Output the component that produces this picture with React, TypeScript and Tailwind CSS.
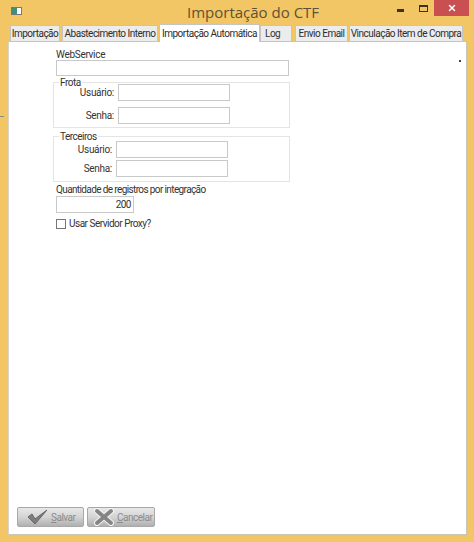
import React from 'react';
import { X } from 'lucide-react';

const Tab: React.FC<{ label: string; className: string }> = ({ label, className }) => (
    <div className={`${className} h-[16px] shrink-0 flex items-center justify-center whitespace-nowrap bg-[#ececec] border border-b-0 border-[#c4c4c4] text-[#2c2c2c]`}>
        {label}
    </div>
);

const Field: React.FC<{ className: string; children?: React.ReactNode }> = ({ className, children }) => (
    <div className={`${className} bg-white border border-[#c9c9c9] flex items-center justify-end pr-[2px]`}>{children}</div>
);

const LoginGroup: React.FC<{ title: string; className: string; labelWidth: string; firstTop: string; gap: string }> = ({ title, className, labelWidth, firstTop, gap }) => (
    <fieldset className={`${className} ml-[44px] border border-[#e4e4e4] w-[237px] px-0 min-w-0`}>
        <legend className="ml-[5px] px-[1px] h-[11px] leading-[11px] text-[#333]">{title}</legend>
        <div className={`${firstTop} flex items-center`}>
            <span className={`${labelWidth} text-right pr-[4px] tracking-[-0.3px]`}>Usuário:</span>
            <Field className="w-[112px] h-[17px]" />
        </div>
        <div className={`${gap} flex items-center`}>
            <span className={`${labelWidth} text-right pr-[4px] tracking-[-0.3px]`}>Senha:</span>
            <Field className="w-[112px] h-[17px]" />
        </div>
    </fieldset>
);

export default function App() {
    return (
        <div className="relative w-[474px] h-[542px] overflow-hidden bg-[#f2c664] flex flex-col font-['Roboto',sans-serif] text-[10px] tracking-[-0.5px] text-[#333]">
            <div className="absolute left-0 top-[116px] w-[4px] h-[1px] bg-[#8a8a8a]" />

            {/* title bar */}
            <div className="h-[25px] shrink-0 flex items-start">
                <div className="w-[11px] ml-[11px] mt-[7px] h-[8px] bg-white border border-[#777] flex">
                    <div className="w-[5px] bg-[#3f8f7d]" />
                </div>
                <div className="flex-1 pl-[165px] pt-[2px] text-[15px] tracking-normal leading-[20px] font-['Open_Sans',sans-serif] text-[#5d5236] whitespace-nowrap">Importação do CTF</div>
                <div className="w-[7px] h-[3px] mt-[9px] bg-[#3a3323] mr-[15px]" />
                <div className="w-[9px] h-[7px] mt-[5px] border border-t-2 border-[#3a3323] mr-[6px]" />
                <div className="w-[35px] h-[16px] bg-[#c94f50] flex items-center justify-center mr-[5px]">
                    <X size={10} strokeWidth={3.5} className="text-white" />
                </div>
            </div>

            {/* tabs */}
            <div className="h-[16px] shrink-0 ml-[10px] flex items-end">
                <Tab label="Importação" className="w-[50px]" />
                <Tab label="Abastecimento Interno" className="ml-[2px] w-[96px]" />
                <div className="ml-[1px] w-[101px] h-[18px] -mb-[1px] shrink-0 relative z-10 flex items-center justify-center pb-[1px] whitespace-nowrap bg-white border border-b-0 border-[#c4c4c4] text-[#2c2c2c]">Importação Automática</div>
                <div className="w-[32px] h-[16px] shrink-0 pl-[4px] flex items-center bg-[#ececec] border border-b-0 border-[#c4c4c4]">Log</div>
                <Tab label="Envio Email" className="ml-[3px] w-[53px]" />
                <Tab label="Vinculação Item de Compra" className="ml-[1px] w-[114px]" />
            </div>

            {/* tab page */}
            <div className="flex-1 ml-[8px] mr-[6px] mb-[6px] bg-white border-t border-l border-t-[#c4c4c4] border-l-[#d8d4cc] border-r-2 border-b-2 border-r-[#c9c5bd] border-b-[#c9c5bd] flex flex-col relative">
                <div className="absolute right-[5px] top-[18px] w-[2px] h-[2px] bg-[#444]" />
                <div className="pl-[47px] pt-[7px] leading-[11px] tracking-[-0.3px]">WebService</div>
                <Field className="ml-[47px] w-[233px] h-[16px]" />

                <LoginGroup title="Frota" className="mt-[1px] h-[51px]" labelWidth="w-[64px]" firstTop="-mt-[4px]" gap="mt-[6px]" />
                <LoginGroup title="Terceiros" className="mt-[3px] h-[51px]" labelWidth="w-[62px]" firstTop="-mt-[1px]" gap="mt-[2px]" />

                <div className="pl-[47px] mt-[2px] leading-[11px] tracking-[-0.62px]">Quantidade de registros por integração</div>
                <Field className="ml-[47px] mt-[1px] w-[78px] h-[17px]">200</Field>
                <div className="ml-[47px] mt-[3px] flex items-center gap-[3px]">
                    <div className="w-[10px] h-[10px] border border-[#777] bg-white" />
                    <span>Usar Servidor Proxy?</span>
                </div>

                {/* buttons */}
                <div className="mt-auto mb-[7px] ml-[8px] flex gap-[3px]">
                    <button className="w-[67px] h-[20px] rounded-[2px] border border-[#a8a8a8] bg-gradient-to-b from-[#e8e8e8] via-[#d4d4d4] to-[#b0b0b0] flex items-center pl-[9px] gap-[4px] text-[#8b8b8b]">
                        <svg width="20" height="16" viewBox="0 0 20 16" fill="none" className="shrink-0">
                            <path d="M1 8 L8 15 L20 1 L8 10 L5 5 Z" fill="#7d7d7d" stroke="#666" strokeWidth="1" strokeLinejoin="round" />
                        </svg>
                        <span><u>S</u>alvar</span>
                    </button>
                    <button className="w-[68px] h-[20px] rounded-[2px] border border-[#a8a8a8] bg-gradient-to-b from-[#e8e8e8] via-[#d4d4d4] to-[#b0b0b0] flex items-center pl-[6px] gap-[3px] text-[#8b8b8b]">
                        <svg width="20" height="18" viewBox="0 0 20 18" fill="none" className="shrink-0">
                            <path d="M3 3 L17 15 M17 3 L3 15" stroke="#f4f4f4" strokeWidth="6" strokeLinecap="round" />
                            <path d="M3 3 L17 15 M17 3 L3 15" stroke="#858585" strokeWidth="4" strokeLinecap="round" />
                        </svg>
                        <span><u>C</u>ancelar</span>
                    </button>
                </div>
            </div>
        </div>
    );
}
